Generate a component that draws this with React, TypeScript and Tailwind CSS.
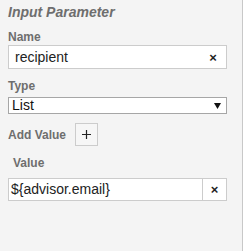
export default function App() {
  return (
    <div className="w-[245px] h-[251px] bg-white flex font-['Liberation_Sans',Arial,sans-serif]">
      <div className="w-[243px] h-full bg-[#f4f4f4] border-r border-[#c8c8c8] pl-[8px] pt-[4px]">
        <h2 className="text-[14px] leading-[16px] font-bold italic text-[#6e6e6e]">Input Parameter</h2>

        <label className="block mt-[10px] text-[12px] leading-[14px] font-bold text-[#6e6e6e]">Name</label>
        <div className="mt-[1px] w-[219px] h-[24px] bg-white border border-[#ccc] flex items-center">
          <span className="flex-1 pl-[6px] text-[14px] text-[#222]">recipient</span>
          <span className="w-[24px] flex justify-center text-[13px] font-bold leading-none text-[#222] pr-[2px]">×</span>
        </div>

        <label className="block mt-[10px] text-[12px] leading-[14px] font-bold text-[#6e6e6e]">Type</label>
        <div className="mt-[4px] w-[219px] h-[17px] bg-white border border-[#a6a6a6] flex items-center">
          <span className="flex-1 pl-[3px] text-[14px] leading-[15px] text-[#111]">List</span>
          <svg width="7" height="6" viewBox="0 0 7 6" className="mr-[5px]">
            <polygon points="0,0 7,0 3.5,6" fill="#111" />
          </svg>
        </div>

        <div className="mt-[9px] flex items-center">
          <span className="text-[12px] leading-[14px] font-bold text-[#6e6e6e]">Add Value</span>
          <button className="ml-[9px] w-[23px] h-[23px] border border-[#ccc] bg-[#f6f6f6] flex items-center justify-center">
            <svg width="9" height="9" viewBox="0 0 9 9">
              <path d="M4.5 0v9M0 4.5h9" stroke="#222" strokeWidth="1.2" />
            </svg>
          </button>
        </div>

        <label className="block mt-[10px] pl-[5px] text-[12px] leading-[14px] font-bold text-[#6e6e6e]">Value</label>
        <div className="mt-[8px] w-[219px] h-[23px] bg-white border border-[#ccc] flex items-stretch">
          <span className="flex-1 flex items-center pl-[2px] text-[14px] text-[#222] border-r border-[#ccc]">${"{advisor.email}"}</span>
          <span className="w-[23px] flex items-center justify-center text-[13px] font-bold leading-none text-[#222]">×</span>
        </div>
      </div>
    </div>
  );
}
